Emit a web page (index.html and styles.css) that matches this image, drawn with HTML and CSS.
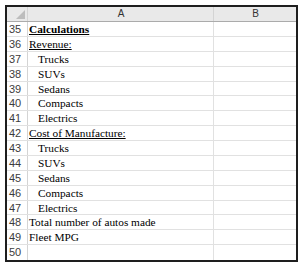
FILE: index.html
```html
<!DOCTYPE html>
<html>
  <head>
    <title>Calculations</title>
    <link rel="stylesheet" href="styles.css">
  </head>
  <body>
    <div class="sheet">
      <div class="row head">
        <div class="num corner"><span class="tri"></span></div>
        <div class="cell colA">A</div>
        <div class="cell colB">B</div>
      </div>
      <div class="row"><div class="num">35</div><div class="cell colA"><b class="ul">Calculations</b></div><div class="cell colB"></div></div>
      <div class="row"><div class="num">36</div><div class="cell colA"><span class="ul">Revenue:</span></div><div class="cell colB"></div></div>
      <div class="row"><div class="num">37</div><div class="cell colA ind">Trucks</div><div class="cell colB"></div></div>
      <div class="row"><div class="num">38</div><div class="cell colA ind">SUVs</div><div class="cell colB"></div></div>
      <div class="row"><div class="num">39</div><div class="cell colA ind">Sedans</div><div class="cell colB"></div></div>
      <div class="row"><div class="num">40</div><div class="cell colA ind">Compacts</div><div class="cell colB"></div></div>
      <div class="row"><div class="num">41</div><div class="cell colA ind">Electrics</div><div class="cell colB"></div></div>
      <div class="row"><div class="num">42</div><div class="cell colA"><span class="ul">Cost of Manufacture:</span></div><div class="cell colB"></div></div>
      <div class="row"><div class="num">43</div><div class="cell colA ind">Trucks</div><div class="cell colB"></div></div>
      <div class="row"><div class="num">44</div><div class="cell colA ind">SUVs</div><div class="cell colB"></div></div>
      <div class="row"><div class="num">45</div><div class="cell colA ind">Sedans</div><div class="cell colB"></div></div>
      <div class="row"><div class="num">46</div><div class="cell colA ind">Compacts</div><div class="cell colB"></div></div>
      <div class="row"><div class="num">47</div><div class="cell colA ind">Electrics</div><div class="cell colB"></div></div>
      <div class="row"><div class="num">48</div><div class="cell colA">Total number of autos made</div><div class="cell colB"></div></div>
      <div class="row"><div class="num">49</div><div class="cell colA">Fleet MPG</div><div class="cell colB"></div></div>
      <div class="row last"><div class="num">50</div><div class="cell colA"></div><div class="cell colB"></div></div>
    </div>
  </body>
</html>
```

FILE: styles.css
```css
body {
  margin: 0;
  background: #fff;
}
.sheet {
  margin: 5px 0 0 5px;
  width: 289px;
  border: 2px solid #1e1e1e;
  font-family: "Liberation Serif", serif;
  font-size: 11.3px;
  color: #000;
}
.row {
  display: flex;
  height: 14.875px;
  border-bottom: 1px solid #e1e1e1;
  box-sizing: border-box;
}
.row.last {
  border-bottom: none;
}
.head {
  background: #e9e9e9;
  border-bottom: 1px solid #ababab;
  height: 15px;
}
.num {
  width: 18px;
  flex: none;
  border-right: 1px solid #d4d4d4;
  font-family: "Liberation Sans", sans-serif;
  font-size: 11px;
  color: #3c3c3c;
  line-height: 14px;
  padding-left: 2px;
  position: relative;
}
.corner {
  background: #e9e9e9;
}
.tri {
  position: absolute;
  right: 2px;
  bottom: 2px;
  width: 0;
  height: 0;
  border-left: 9px solid transparent;
  border-bottom: 9px solid #bdbdbd;
}
.cell {
  box-sizing: border-box;
  line-height: 14px;
  padding-left: 1px;
  white-space: nowrap;
}
.colA {
  width: 186px;
  flex: none;
  border-right: 1px solid #e1e1e1;
}
.colB {
  flex: 1;
}
.head .cell {
  font-family: "Liberation Sans", sans-serif;
  font-size: 10px;
  color: #333;
  text-align: center;
  border-right-color: #d4d4d4;
}
.ind {
  padding-left: 10px;
}
.ul {
  text-decoration: underline;
}
```
